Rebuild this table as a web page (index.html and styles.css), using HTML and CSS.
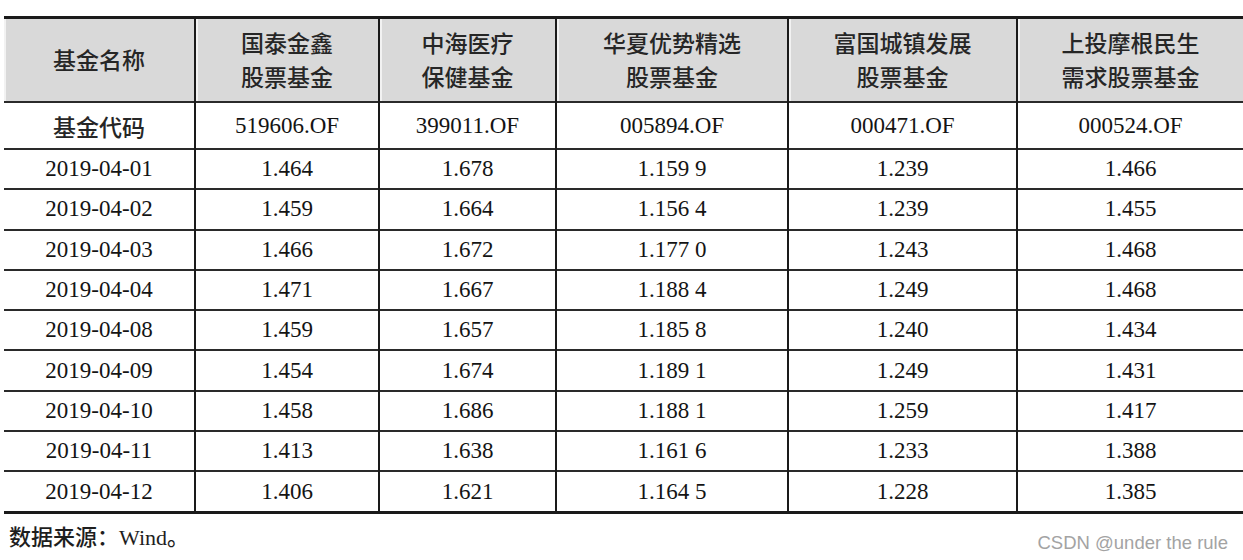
FILE: index.html
```html
<!DOCTYPE html>
<html lang="zh-CN">
<head>
<meta charset="utf-8">
<title>基金净值</title>
<link rel="stylesheet" href="styles.css">
</head>
<body>
<div class="page">
  <table class="fund-table">
    <colgroup>
      <col class="c1"><col class="c2"><col class="c3"><col class="c4"><col class="c5"><col class="c6">
    </colgroup>
    <thead>
      <tr class="head-row">
        <th>基金名称</th>
        <th>国泰金鑫<br>股票基金</th>
        <th>中海医疗<br>保健基金</th>
        <th>华夏优势精选<br>股票基金</th>
        <th>富国城镇发展<br>股票基金</th>
        <th>上投摩根民生<br>需求股票基金</th>
      </tr>
    </thead>
    <tbody>
      <tr class="code-row">
        <th>基金代码</th>
        <td>519606.OF</td>
        <td>399011.OF</td>
        <td>005894.OF</td>
        <td>000471.OF</td>
        <td>000524.OF</td>
      </tr>
      <tr class="data-row"><td>2019-04-01</td><td>1.464</td><td>1.678</td><td>1.159 9</td><td>1.239</td><td>1.466</td></tr>
      <tr class="data-row"><td>2019-04-02</td><td>1.459</td><td>1.664</td><td>1.156 4</td><td>1.239</td><td>1.455</td></tr>
      <tr class="data-row"><td>2019-04-03</td><td>1.466</td><td>1.672</td><td>1.177 0</td><td>1.243</td><td>1.468</td></tr>
      <tr class="data-row"><td>2019-04-04</td><td>1.471</td><td>1.667</td><td>1.188 4</td><td>1.249</td><td>1.468</td></tr>
      <tr class="data-row"><td>2019-04-08</td><td>1.459</td><td>1.657</td><td>1.185 8</td><td>1.240</td><td>1.434</td></tr>
      <tr class="data-row"><td>2019-04-09</td><td>1.454</td><td>1.674</td><td>1.189 1</td><td>1.249</td><td>1.431</td></tr>
      <tr class="data-row"><td>2019-04-10</td><td>1.458</td><td>1.686</td><td>1.188 1</td><td>1.259</td><td>1.417</td></tr>
      <tr class="data-row"><td>2019-04-11</td><td>1.413</td><td>1.638</td><td>1.161 6</td><td>1.233</td><td>1.388</td></tr>
      <tr class="data-row"><td>2019-04-12</td><td>1.406</td><td>1.621</td><td>1.164 5</td><td>1.228</td><td>1.385</td></tr>
    </tbody>
  </table>
  <div class="footer">
    <p class="source">数据来源：<span class="latin">Wind</span>。</p>
    <span class="watermark">CSDN @under the rule</span>
  </div>
</div>
</body>
</html>
```

FILE: styles.css
```css
html, body {
  margin: 0;
  padding: 0;
  background: #ffffff;
}

.page {
  width: 1243px;
  padding-top: 16px;
  padding-left: 4px;
  box-sizing: border-box;
}

.fund-table {
  width: 1239px;
  table-layout: fixed;
  border-collapse: collapse;
  border-top: 3px solid #1a1a1a;
  border-bottom: 3px solid #1a1a1a;
  font-family: "Liberation Serif", "Noto Sans CJK SC", serif;
  font-size: 23px;
  color: #141414;
}

.c1 { width: 191px; }
.c2 { width: 184px; }
.c3 { width: 177px; }
.c4 { width: 232px; }
.c5 { width: 229px; }
.c6 { width: 226px; }

.fund-table th,
.fund-table td {
  padding: 0;
  text-align: center;
  vertical-align: middle;
  border-left: 2px solid #1a1a1a;
  border-top: 2px solid #2a2a2a;
}

.fund-table tr > :first-child {
  border-left: none;
}

.head-row th {
  height: 80px;
  background: #d9d9d9;
  box-shadow: inset 2px 0 0 #f2f2f2;
  font-family: "Noto Sans CJK SC", sans-serif;
  font-weight: 500;
  font-size: 23px;
  line-height: 34px;
  color: #262626;
  padding-bottom: 2px;
}

.code-row th,
.code-row td {
  height: 45px;
}

.code-row th {
  font-family: "Noto Sans CJK SC", sans-serif;
  font-weight: 500;
  font-size: 23px;
  color: #262626;
}

.data-row td {
  height: 38.3px;
}

.footer {
  display: flex;
  justify-content: space-between;
  align-items: center;
  padding: 6px 15px 0 5px;
}

.source {
  margin: 0;
  font-family: "Noto Sans CJK SC", sans-serif;
  font-weight: 500;
  font-size: 22px;
  line-height: 30px;
  color: #1e1e1e;
}

.source .latin {
  font-family: "Liberation Serif", serif;
  font-weight: 400;
  font-size: 22px;
}

.watermark {
  font-family: "Liberation Sans", Arial, sans-serif;
  font-size: 18.5px;
  color: #a3a3a3;
  padding-top: 12px;
}
```
